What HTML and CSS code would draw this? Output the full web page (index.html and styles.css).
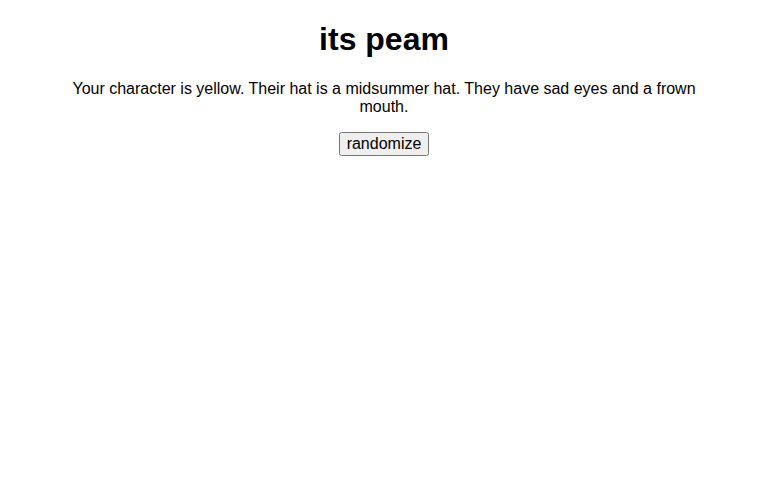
FILE: index.html
```html
<!DOCTYPE html>
<html lang="en">
  <head>
    <meta charset="UTF-8" />
    <meta name="viewport" content="width=device-width, initial-scale=1.0" />
    <title>its peam</title>
    <link rel="stylesheet" href="styles.css">
  </head>
  <body>
    <div class="container">
      <h1>its peam</h1>
      <p id="description">Your character is yellow. Their hat is a midsummer hat. They have sad eyes and a frown mouth.</p>
      <button id="randomize">randomize</button>
    </div>
  </body>
</html>
```

FILE: styles.css
```css
/* Basic styling */
body {
  margin: 0;
  font-family: "Liberation Sans", Arial, sans-serif;
  background-color: #ffffff;
  color: #000000;
}

.container {
  text-align: center;
  padding: 0 64px;
}

h1 {
  font-size: 32px;
}

#randomize {
  font-family: "Liberation Sans", Arial, sans-serif;
  font-size: 16px;
}
```
